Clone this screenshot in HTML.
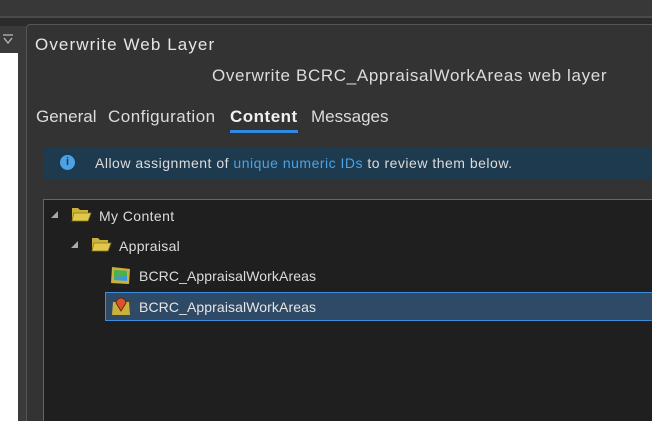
<!DOCTYPE html>
<html style="width:652px;height:421px;overflow:hidden"><head><meta charset="utf-8"><style>
*{margin:0;padding:0;box-sizing:border-box}
body{width:652px;height:421px;overflow:hidden;background:#2b2b2b;font-family:"Liberation Sans",sans-serif;position:relative;color:#dcdcdc}
.a{position:absolute}
.t{position:absolute;white-space:nowrap}
</style></head><body>
<div class="a" style="left:0;top:0;width:652px;height:16px;background:#383838"></div>
<div class="a" style="left:0;top:16px;width:652px;height:2px;background:#4a4a4a"></div>
<div class="a" style="left:0;top:18px;width:652px;height:6px;background:#2b2b2b"></div>
<div class="a" style="left:0;top:26px;width:18px;height:27px;background:#3a3a3a"></div>
<svg class="a" style="left:2px;top:34px" width="12" height="12"><path d="M1 1H11M2 4L6 9L10 4" stroke="#bbb" fill="none" stroke-width="1.3"/></svg>
<div class="a" style="left:0;top:53px;width:18px;height:368px;background:#fff"></div>
<div class="a" style="left:18px;top:26px;width:8px;height:395px;background:#3a3a3a"></div>
<div class="a" style="left:26px;top:24px;width:626px;height:397px;background:#333;border-left:1px solid #555;border-top:1px solid #555;border-radius:4px 0 0 0"></div>
<div class="t" style="left:35px;top:35px;font-size:17px;color:#e6e6e6;letter-spacing:1.1px">Overwrite Web Layer</div>
<div class="t" style="left:212px;top:66px;font-size:17px;color:#dcdcdc;letter-spacing:0.65px">Overwrite BCRC_AppraisalWorkAreas web layer</div>
<div class="t" style="left:36px;top:107px;font-size:17px;color:#dcdcdc">General</div>
<div class="t" style="left:108px;top:107px;font-size:17px;color:#dcdcdc;letter-spacing:0.5px">Configuration</div>
<div class="t" style="left:230px;top:107px;font-size:17px;color:#f0f0f0;font-weight:bold;letter-spacing:0.5px">Content</div>
<div class="a" style="left:230px;top:130px;width:68px;height:3px;background:#2d8ae0"></div>
<div class="t" style="left:311px;top:107px;font-size:17px;color:#dcdcdc">Messages</div>
<div class="a" style="left:43px;top:147px;width:609px;height:32px;background:#1e3a4f"></div>
<div class="a" style="left:60px;top:155px;width:15px;height:15px;border-radius:50%;background:#4aa3e6;color:#1e3a4f;font-size:11px;font-weight:bold;text-align:center;line-height:15px">i</div>
<div class="t" style="left:95px;top:155px;font-size:14px;color:#dcdcdc;letter-spacing:0.5px">Allow assignment of <span style="color:#4aa3e6">unique numeric IDs</span> to review them below.</div>
<div class="a" style="left:43px;top:199px;width:620px;height:230px;background:#1f1f1f;border:1px solid #666"></div>
<svg class="a" style="left:50px;top:210px" width="9" height="9"><path d="M8 1V8H1Z" fill="#aaa"/></svg>
<svg class="a" style="left:71px;top:206px" width="21" height="18"><path d="M1 2H7L9 4H17V15H1Z" fill="#c9b13a"/><path d="M3 7H20L17 15H1Z" fill="#e2c84a" stroke="#8a7a20" stroke-width=".8"/></svg>
<div class="t" style="left:99px;top:208px;font-size:14px;color:#dcdcdc;letter-spacing:0.4px">My Content</div>
<svg class="a" style="left:70px;top:240px" width="9" height="9"><path d="M8 1V8H1Z" fill="#aaa"/></svg>
<svg class="a" style="left:91px;top:236px" width="21" height="18"><path d="M1 2H7L9 4H17V15H1Z" fill="#c9b13a"/><path d="M3 7H20L17 15H1Z" fill="#e2c84a" stroke="#8a7a20" stroke-width=".8"/></svg>
<div class="t" style="left:119px;top:238px;font-size:14px;color:#dcdcdc;letter-spacing:0.3px">Appraisal</div>
<svg class="a" style="left:110px;top:266px" width="22" height="20"><path d="M2 1L20 3L19 18L1 17Z" fill="#c9b13a"/><path d="M4 4L17 5L17 15L4 14Z" fill="#3a9ad9"/><path d="M4 4L17 5L17 10L4 11Z" fill="#4caf50"/></svg>
<div class="t" style="left:139px;top:268px;font-size:14px;color:#dcdcdc;letter-spacing:0.1px">BCRC_AppraisalWorkAreas</div>
<div class="a" style="left:105px;top:292px;width:560px;height:29px;background:#2f4a66;border:1px solid #3d8ee0"></div>
<svg class="a" style="left:110px;top:294px" width="22" height="24"><path d="M3 8L19 8L20 21L2 21Z" fill="#c9b13a"/><path d="M11 17L6 9A5 5 0 1 1 16 9Z" fill="#d9532b" stroke="#5a2010" stroke-width=".8"/></svg>
<div class="t" style="left:139px;top:299px;font-size:14px;color:#e6e6e6;letter-spacing:0.1px">BCRC_AppraisalWorkAreas</div>
</body></html>
